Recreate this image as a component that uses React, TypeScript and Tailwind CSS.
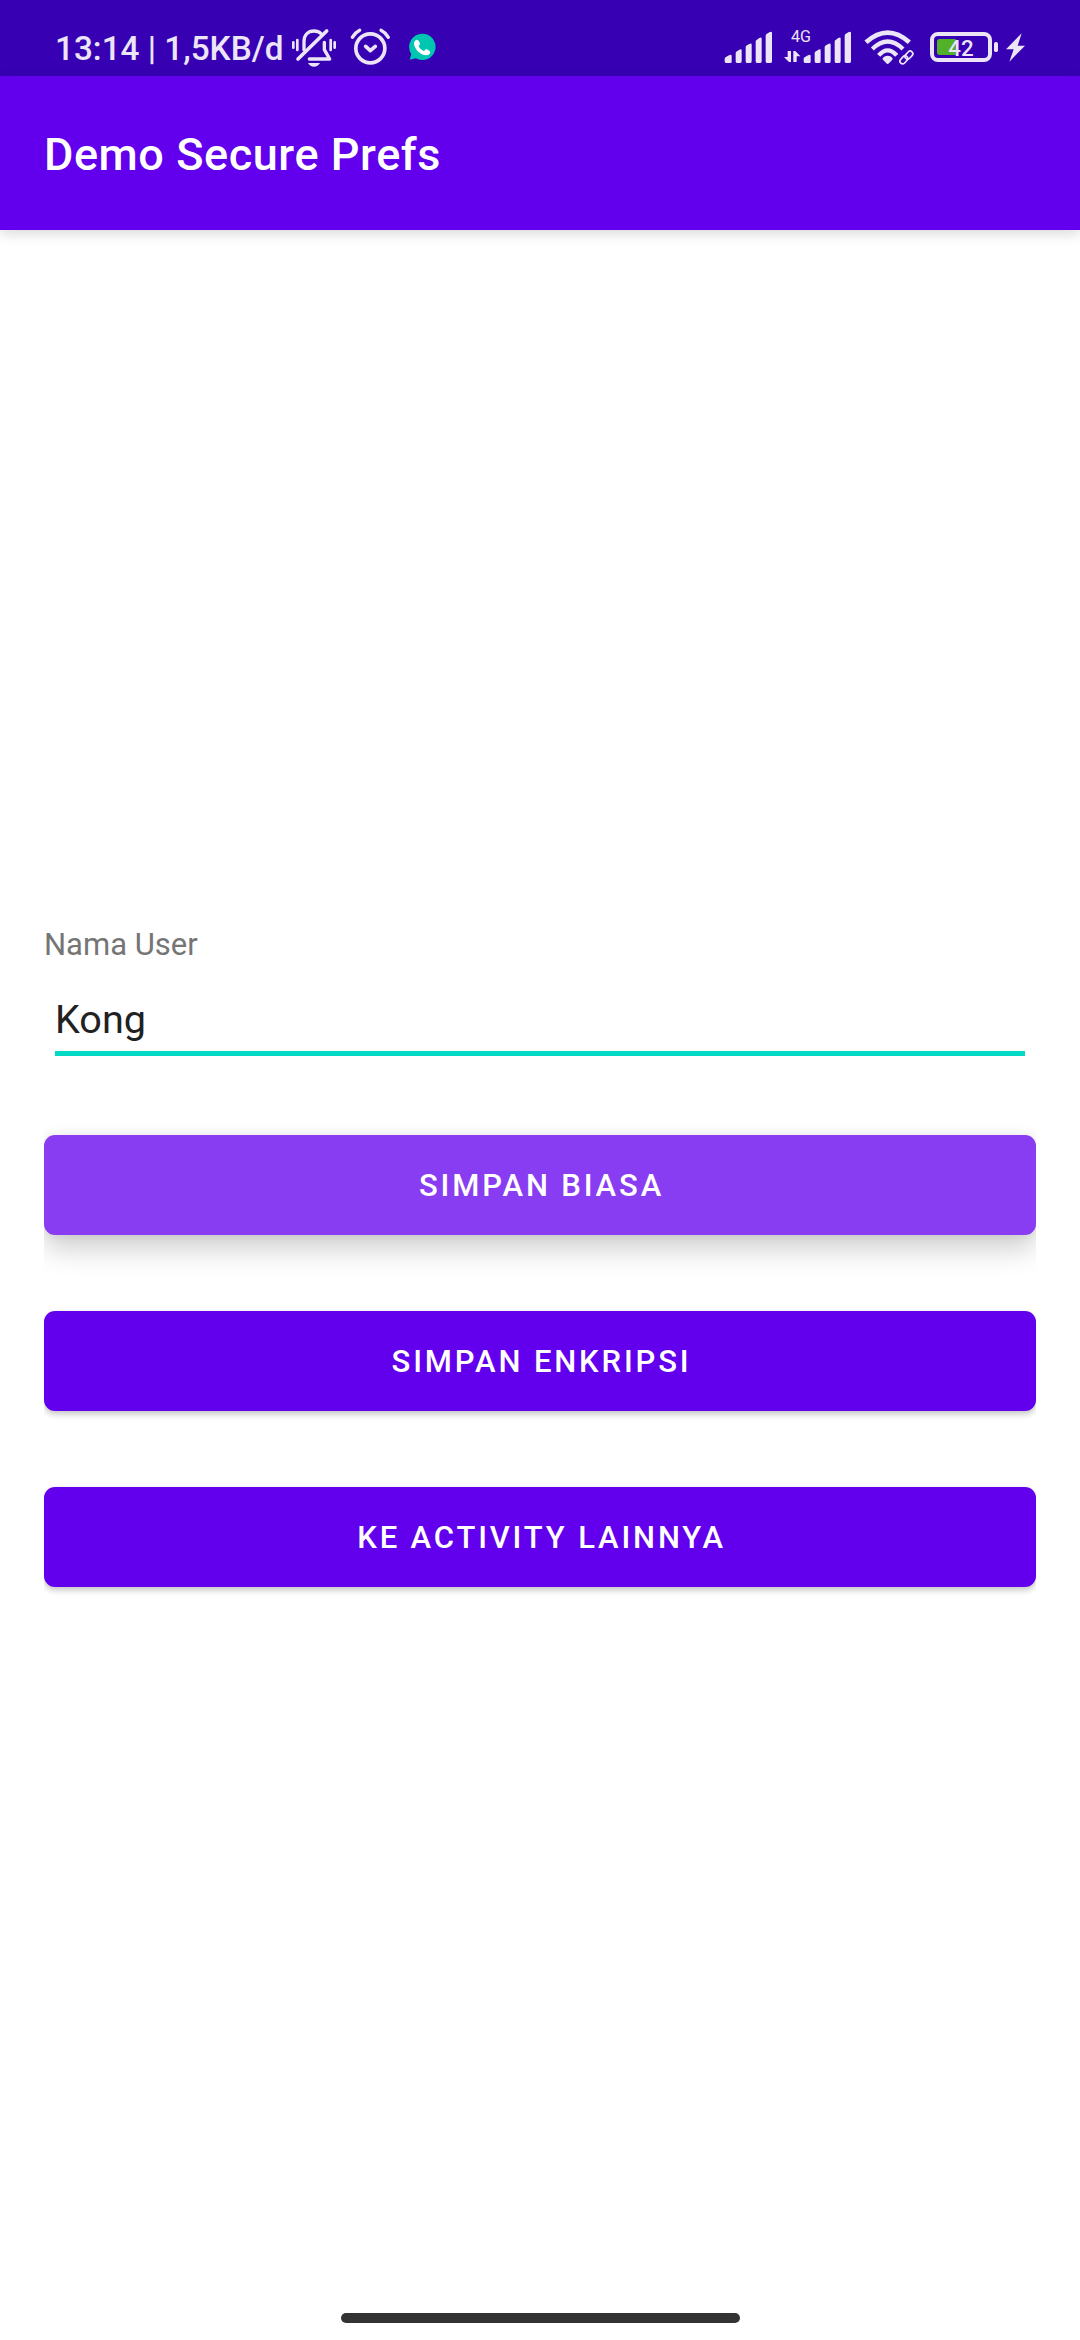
import React from 'react';

const TINT = '#EBE5F7';

const BUTTON_DATA = [
  {
    id: 1,
    title: 'SIMPAN BIASA',
    className: 'bg-[#893DF2] shadow-[0_14px_28px_rgba(0,0,0,0.19),0_1px_12px_rgba(0,0,0,0.07)]',
  },
  {
    id: 2,
    title: 'SIMPAN ENKRIPSI',
    className: 'bg-[#6200EE] shadow-[0_3px_6px_rgba(0,0,0,0.24)]',
  },
  {
    id: 3,
    title: 'KE ACTIVITY LAINNYA',
    className: 'bg-[#6200EE] shadow-[0_3px_6px_rgba(0,0,0,0.24)]',
  },
];

const BellOffIcon = () => (
  <svg width="48" height="42" viewBox="30 36 144 126" fill="none" stroke={TINT} strokeLinecap="round">
    <path d="M40 82v16M52 75v30M152 75v30M164 82v16" strokeWidth="8" />
    <path d="M72 104V80c0-20 12-32 30-32 9 0 16 3 21 8" strokeWidth="10" />
    <path d="M54 132L140 48" strokeWidth="11" />
    <path d="M133 82v22l16 28H88" strokeWidth="10" strokeLinejoin="round" />
    <path d="M84 144h36c-4 7-10 11-18 11s-14-4-18-11z" fill={TINT} stroke="none" />
  </svg>
);

const AlarmIcon = () => (
  <svg width="42" height="42" viewBox="207 36 126 126" fill="none" stroke={TINT} strokeLinecap="round">
    <circle cx="271" cy="100" r="43.500" strokeWidth="11" />
    <path d="M217 67c5-9 12-16 22-21M325 67c-5-9-12-16-22-21" strokeWidth="10" />
    <path d="M257 94l14 13 15-13" strokeWidth="11" strokeLinejoin="round" />
  </svg>
);

const WhatsappIcon = () => (
  <svg width="28" height="42" viewBox="384 36 84 126">
    <path d="M427 56a39.500 39.500 0 1 1-19 74l-19 4 5-17A39.500 39.500 0 0 1 427 56z" fill="#00C5B0" />
    <path
      d="M410 74c-4 1-8 5-8 11 0 17 19 36 37 36 6 0 11-4 12-9 0-4-10-9-13-9-3 0-4 6-7 5-7-3-12-8-15-14-1-3 4-4 4-8 0-3-5-13-10-12z"
      fill="#FFFFFF"
    />
  </svg>
);

const SIGNAL_BARS =
  'M29 139v-8q0-3 4-5l9-5q8-4 8 2v17q0 4-4 4H33q-4 0-4-5zM62 139v-24q0-4 4-6l7-5q7-4 7 2v33q0 5-4 5H66q-4 0-4-5zM92 139V97q0-4 4-6l7-4q7-4 7 2v50q0 5-4 5H96q-4 0-4-5zM122 139V80q0-4 4-6l7-5q7-4 7 2v68q0 5-4 5h-10q-4 0-4-5zM152 139V62q0-4 4-6l7-4q8-4 8 2v85q0 5-4 5h-11q-4 0-4-5z';

const SignalIcon = () => (
  <svg width="50" height="42" viewBox="24 36 150 126" fill={TINT}>
    <path d={SIGNAL_BARS} />
  </svg>
);

const DataSignalIcon = () => (
  <svg width="69" height="42" viewBox="204 36 207 126" fill={TINT}>
    <text x="228" y="82" fontSize="48" fontFamily="Roboto, sans-serif">
      4G
    </text>
    <path d="M218 108h10v33h-6l-15-15h11zM235 141V108h6l15 16h-11v17z" />
    <path d={SIGNAL_BARS} transform="translate(237 0)" />
  </svg>
);

const WifiIcon = () => (
  <svg width="53" height="42" viewBox="24 36 159 126" fill="none" stroke={TINT}>
    <path d="M33 82Q98 24 163 82" strokeWidth="14" />
    <path d="M52 102Q98 57 144 102" strokeWidth="13" />
    <path d="M71 121Q98 91 125 121" strokeWidth="13" />
    <path d="M98 122c6 0 10 2 14 6 1 2 1 4 0 6l-10 11q-4 4-8 0l-10-11c-2-2-1-4 0-6 4-4 8-6 14-6z" fill={TINT} stroke="none" />
    <g stroke="#3700B3" strokeWidth="14">
      <rect x="-13" y="-7" width="26" height="14" rx="7" transform="translate(162 120) rotate(-47)" />
      <rect x="-13" y="-7" width="26" height="14" rx="7" transform="translate(147 134) rotate(-47)" />
    </g>
    <g strokeWidth="5" strokeLinecap="round">
      <rect x="-14" y="-8" width="27" height="16" rx="8" transform="translate(162 120) rotate(-47)" />
      <rect x="-14" y="-8" width="27" height="16" rx="8" transform="translate(147 134) rotate(-47)" />
    </g>
  </svg>
);

const BatteryIcon = () => (
  <svg width="70" height="42" viewBox="222 36 210 126">
    <rect x="231" y="57" width="174" height="78" rx="18" fill="none" stroke={TINT} strokeWidth="12" />
    <path d="M254 72h48v48h-48q-8 0-8-8V80q0-8 8-8z" fill="#52B127" />
    <rect x="417" y="81" width="12" height="30" rx="5" fill={TINT} />
    <text x="280" y="123" fontSize="67" fontWeight="500" fontFamily="Roboto, sans-serif" fill={TINT}>
      42
    </text>
  </svg>
);

const BoltIcon = () => (
  <svg width="21" height="42" viewBox="450 36 63 126" fill={TINT}>
    <path d="M500 55L453 103h23l-13 37 47-48h-22z" />
  </svg>
);

const StatusBar = () => (
  <div className="flex h-[76px] items-start justify-between bg-[#3700B3] pt-[27px] pr-[54px] pl-[55px]">
    <div className="flex">
      <span className="w-[235px] text-[33.3px] leading-[43px] font-medium whitespace-nowrap text-[#EBE5F7]">
        13:14 | 1,5KB/d
      </span>
      <BellOffIcon />
      <div className="ml-[11px] flex gap-[17px]">
        <AlarmIcon />
        <WhatsappIcon />
      </div>
    </div>
    <div className="flex">
      <SignalIcon />
      <div className="ml-2.5 flex gap-[11px]">
        <DataSignalIcon />
        <WifiIcon />
      </div>
      <div className="ml-[13px] flex gap-1.5">
        <BatteryIcon />
        <BoltIcon />
      </div>
    </div>
  </div>
);

const App = () => {
  return (
    <div className="flex h-[2340px] w-[1080px] flex-col bg-white font-[Roboto,sans-serif]">
      <StatusBar />
      <header className="flex h-[154px] items-center bg-[#6200EE] px-11 pt-1 shadow-[0_4px_12px_rgba(0,0,0,0.15)]">
        <h1 className="text-[45px] font-medium tracking-[0.0125em] text-white">Demo Secure Prefs</h1>
      </header>
      <main className="mt-[696px] flex flex-col">
        <label htmlFor="nama" className="px-11 text-[31px] leading-[38px] text-[#757575]">
          Nama User
        </label>
        <div className="mx-[55px] mt-[27px] h-[65px] border-b-[5px] border-[#03DAC5]">
          <input
            id="nama"
            defaultValue="Kong"
            className="block h-[58px] w-full text-[39.6px] leading-[58px] text-[#212121] outline-none"
          />
        </div>
        <div className="mx-11 mt-[39px] flex flex-col gap-[76px] overflow-hidden pt-10 pb-10">
          {BUTTON_DATA.map(item => (
            <button
              key={item.id}
              className={`h-[100px] rounded-[11px] pt-0.5 pl-[3px] text-[31px] font-medium tracking-[0.092em] text-white ${item.className}`}
            >
              {item.title}
            </button>
          ))}
        </div>
      </main>
      <div className="mx-auto mt-auto mb-[17px] h-2.5 w-[399px] rounded-full bg-[#333333]" />
    </div>
  );
};

export default App;
